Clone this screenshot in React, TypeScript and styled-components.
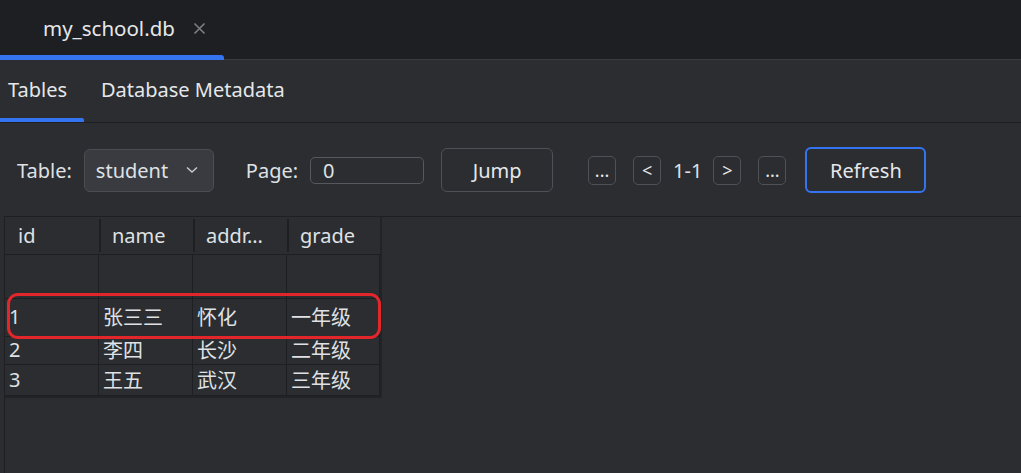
import styled, { createGlobalStyle } from "styled-components";

const GlobalStyle = createGlobalStyle`
  html, body {
    margin: 0;
    padding: 0;
    background: #2b2d30;
    color: #dfe1e5;
    font-family: "Noto Sans", "Noto Sans CJK SC", sans-serif;
    font-size: 20px;
    height: 100%;
    overflow: hidden;
  }
  #root {
    height: 100%;
  }
`;

const Page = styled.div`
  display: flex;
  flex-direction: column;
  height: 100vh;
  white-space: nowrap;
`;

const TopBar = styled.div`
  height: 59px;
  background: #1e1f22;
  border-bottom: 1px solid #393b40;
  display: flex;
  align-items: stretch;
  flex-shrink: 0;
`;

const FileTab = styled.div`
  width: 224px;
  position: relative;
  display: flex;
  align-items: center;
  padding-left: 43px;
  box-sizing: border-box;
  gap: 18px;
  font-size: 20.5px;
  color: #e6e7ea;
  padding-bottom: 3px;

  &::after {
    content: "";
    position: absolute;
    left: 0;
    right: 0;
    bottom: -1px;
    height: 5px;
    background: #3574f0;
    border-radius: 0 3px 0 0;
  }
`;

const CloseIcon = styled.svg`
  width: 13px;
  height: 13px;
  margin-top: 1px;
`;

const SubTabs = styled.div`
  height: 62px;
  display: flex;
  align-items: stretch;
  border-bottom: 1px solid #1e1f22;
  flex-shrink: 0;
`;

const SubTab = styled.div<{ $active?: boolean; $width: number }>`
  width: ${({ $width }) => $width}px;
  position: relative;
  display: flex;
  align-items: center;
  padding-left: ${({ $active }) => ($active ? 8 : 17)}px;
  box-sizing: border-box;
  font-size: 20px;
  color: #e6e7ea;
  padding-bottom: 4px;

  &::after {
    content: "";
    display: ${({ $active }) => ($active ? "block" : "none")};
    position: absolute;
    left: 0;
    right: 0;
    bottom: 0;
    height: 4px;
    background: #3574f0;
    border-radius: 0 2px 0 0;
  }
`;

const Toolbar = styled.div`
  height: 93px;
  display: flex;
  align-items: center;
  padding-left: 17px;
  flex-shrink: 0;
  padding-top: 1px;
  box-sizing: border-box;
`;

const Label = styled.span<{ $left?: number }>`
  margin-left: ${({ $left }) => $left ?? 0}px;
  font-size: 20px;
`;

const Select = styled.div<{ $left?: number }>`
  margin-left: ${({ $left }) => $left ?? 0}px;
  width: 130px;
  height: 43px;
  box-sizing: border-box;
  background: #393b40;
  border: 1px solid #4b4d52;
  border-radius: 6px;
  display: flex;
  align-items: center;
  justify-content: space-between;
  padding: 0 15px 0 11px;
  font-size: 20px;
`;

const Input = styled.div<{ $left?: number }>`
  margin-left: ${({ $left }) => $left ?? 0}px;
  width: 114px;
  height: 27px;
  box-sizing: border-box;
  border: 1px solid #55585e;
  border-radius: 5px;
  display: flex;
  align-items: center;
  padding-left: 12px;
  font-size: 20px;
`;

const Button = styled.div<{ $left?: number; $w: number; $h: number; $primary?: boolean }>`
  margin-left: ${({ $left }) => $left ?? 0}px;
  width: ${({ $w }) => $w}px;
  height: ${({ $h }) => $h}px;
  box-sizing: border-box;
  border: ${({ $primary }) => ($primary ? "2px solid #3574f0" : "1px solid #4e5157")};
  border-radius: ${({ $h }) => ($h < 35 ? 5 : 6)}px;
  display: flex;
  align-items: center;
  justify-content: center;
  font-size: ${({ $h }) => ($h < 35 ? 18 : 20)}px;
  color: #e6e7ea;
`;

const PageNum = styled.span<{ $left?: number }>`
  margin-left: ${({ $left }) => $left ?? 0}px;
  font-size: 20px;
`;

const TableArea = styled.div`
  flex: 1;
  margin-left: 4px;
  border-top: 1px solid #1e1f22;
  border-left: 1px solid #1e1f22;
  position: relative;
`;

const Grid = styled.div`
  display: grid;
  grid-template-columns: 94px 94px 94px 93px;
  width: 375px;
  border-right: 2px solid #222326;
  border-bottom: 2px solid #222326;
`;

const HeadCell = styled.div<{ $last?: boolean }>`
  height: 38px;
  display: flex;
  align-items: center;
  padding-left: 13px;
  font-size: 20px;
  position: relative;
  border-bottom: 1px solid #1e1f22;
  box-sizing: border-box;

  &::after {
    content: "";
    display: ${({ $last }) => ($last ? "none" : "block")};
    position: absolute;
    right: -2px;
    top: 2px;
    bottom: 2px;
    width: 2px;
    background: #1e1f22;
  }
`;

const Cell = styled.div<{ $h: number }>`
  height: ${({ $h }) => $h}px;
  display: flex;
  align-items: center;
  padding-left: 4px;
  padding-bottom: 2px;
  font-size: 20px;
  box-sizing: border-box;
  border-right: 1px solid #1e1f22;
  border-bottom: 1px solid #1e1f22;
`;

const Highlight = styled.div`
  position: absolute;
  left: 2px;
  top: 76px;
  width: 374px;
  height: 46px;
  box-sizing: border-box;
  border: 3px solid #e3262a;
  border-radius: 11px;
  pointer-events: none;
`;

const rows = [
  { h: 44, cells: ["", "", "", ""] },
  { h: 38, cells: ["1", "张三三", "怀化", "一年级"] },
  { h: 28, cells: ["2", "李四", "长沙", "二年级"] },
  { h: 31, cells: ["3", "王五", "武汉", "三年级"] },
];

const headers = ["id", "name", "addr...", "grade"];

export default function App() {
  return (
    <Page>
      <GlobalStyle />
      <TopBar>
        <FileTab>
          my_school.db
          <CloseIcon viewBox="0 0 13 13">
            <path d="M1.5 1.5 L11.5 11.5 M11.5 1.5 L1.5 11.5" stroke="#7c7e83" strokeWidth="1.6" />
          </CloseIcon>
        </FileTab>
      </TopBar>

      <SubTabs>
        <SubTab $active $width={84}>Tables</SubTab>
        <SubTab $width={220}>Database Metadata</SubTab>
      </SubTabs>

      <Toolbar>
        <Label>Table:</Label>
        <Select $left={12}>
          student
          <svg width="12" height="8" viewBox="0 0 12 8">
            <path d="M1 1.5 L6 6 L11 1.5" stroke="#c8cacf" strokeWidth="1.4" fill="none" />
          </svg>
        </Select>
        <Label $left={32}>Page:</Label>
        <Input $left={12}>0</Input>
        <Button $left={17} $w={112} $h={44}>Jump</Button>
        <Button $left={35} $w={28} $h={29}>...</Button>
        <Button $left={17} $w={28} $h={29}>&lt;</Button>
        <PageNum $left={12}>1-1</PageNum>
        <Button $left={11} $w={28} $h={29}>&gt;</Button>
        <Button $left={17} $w={28} $h={29}>...</Button>
        <Button $left={19} $w={121} $h={46} $primary>Refresh</Button>
      </Toolbar>

      <TableArea>
        <Grid>
          {headers.map((h, i) => (
            <HeadCell key={h} $last={i === headers.length - 1}>{h}</HeadCell>
          ))}
          {rows.map((r, ri) =>
            r.cells.map((c, ci) => (
              <Cell key={`${ri}-${ci}`} $h={r.h}>{c}</Cell>
            ))
          )}
        </Grid>
        <Highlight />
      </TableArea>
    </Page>
  );
}
